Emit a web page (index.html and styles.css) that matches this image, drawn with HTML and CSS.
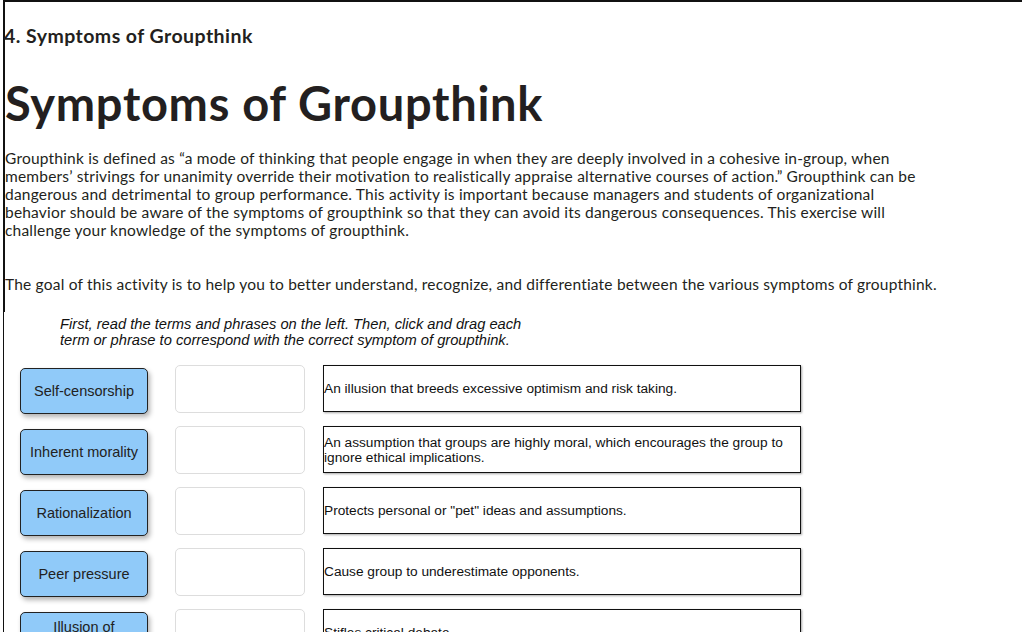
FILE: index.html
```html
<!DOCTYPE html>
<html>
<head>
<meta charset="utf-8">
<link rel="stylesheet" href="styles.css">
</head>
<body>
<div class="page">
  <div class="intro">
    <h2 class="kicker">4. Symptoms of Groupthink</h2>
    <h1 class="title">Symptoms of Groupthink</h1>
    <p class="para">Groupthink is defined as “a mode of thinking that people engage in when they are deeply involved in a cohesive in-group, when members’ strivings for unanimity override their motivation to realistically appraise alternative courses of action.” Groupthink can be dangerous and detrimental to group performance. This activity is important because managers and students of organizational behavior should be aware of the symptoms of groupthink so that they can avoid its dangerous consequences. This exercise will challenge your knowledge of the symptoms of groupthink.</p>
    <p class="para goal">The goal of this activity is to help you to better understand, recognize, and differentiate between the various symptoms of groupthink.</p>
  </div>
  <div class="activity">
    <p class="instr">First, read the terms and phrases on the left. Then, click and drag each<br>term or phrase to correspond with the correct symptom of groupthink.</p>
    <div class="rows">
      <div class="row">
        <div class="chip">Self-censorship</div>
        <div class="drop"></div>
        <div class="desc">An illusion that breeds excessive optimism and risk taking.</div>
      </div>
      <div class="row">
        <div class="chip">Inherent morality</div>
        <div class="drop"></div>
        <div class="desc">An assumption that groups are highly moral, which encourages the group to ignore ethical implications.</div>
      </div>
      <div class="row">
        <div class="chip">Rationalization</div>
        <div class="drop"></div>
        <div class="desc">Protects personal or "pet" ideas and assumptions.</div>
      </div>
      <div class="row">
        <div class="chip">Peer pressure</div>
        <div class="drop"></div>
        <div class="desc">Cause group to underestimate opponents.</div>
      </div>
      <div class="row">
        <div class="chip">Illusion of invulnerability</div>
        <div class="drop"></div>
        <div class="desc">Stifles critical debate.</div>
      </div>
    </div>
  </div>
</div>
</body>
</html>
```

FILE: styles.css
```css
html, body {
  margin: 0;
  padding: 0;
  background: #fff;
  overflow: hidden;
}
body {
  font-family: Lato, "Open Sans", sans-serif;
  color: #231f20;
}
.page {
  margin-left: 3px;
  border-top: 2px solid #111;
}
.intro {
  border-left: 2px solid #111;
  height: 310px;
  box-sizing: border-box;
  padding-top: 22px;
}
.kicker {
  margin: 0 0 0 -1px;
  font-size: 19.5px;
  line-height: 24px;
  font-weight: 700;
  letter-spacing: 0.45px;
}
.title {
  margin: 27px 0 0 0;
  font-size: 47px;
  line-height: 56px;
  font-weight: 700;
  letter-spacing: 0.7px;
}
.para {
  margin: 18px 0 0 0;
  width: 930px;
  font-size: 15.5px;
  line-height: 18px;
  letter-spacing: 0.2px;
}
.para.goal {
  margin-top: 36px;
  width: 1010px;
}
.activity {
  border-left: 1px solid #111;
  font-family: "Liberation Sans", Arial, sans-serif;
  color: #111;
}
.instr {
  margin: 0;
  padding: 4px 0 0 56px;
  font-style: italic;
  font-size: 14.7px;
  line-height: 16px;
}
.rows {
  display: flex;
  flex-direction: column;
  gap: 13px;
  padding-top: 17px;
}
.row {
  display: flex;
  align-items: flex-start;
  height: 48px;
}
.chip {
  margin: 3px 0 0 16px;
  width: 128px;
  height: 46px;
  box-sizing: border-box;
  background: #90caf9;
  border: 1px solid #222;
  border-radius: 5px;
  box-shadow: 2px 3px 5px rgba(0,0,0,0.3);
  display: flex;
  align-items: center;
  justify-content: center;
  text-align: center;
  font-size: 14.5px;
  color: #222;
}
.drop {
  margin-left: 27px;
  width: 130px;
  height: 48px;
  box-sizing: border-box;
  border: 1px solid #ddd;
  border-radius: 5px;
}
.desc {
  margin-left: 18px;
  width: 478px;
  height: 47px;
  box-sizing: border-box;
  border: 1px solid #111;
  box-shadow: 1px 1px 2px rgba(0,0,0,0.35);
  display: flex;
  align-items: center;
  font-size: 13.7px;
  line-height: 15px;
  padding-right: 10px;
}
```
